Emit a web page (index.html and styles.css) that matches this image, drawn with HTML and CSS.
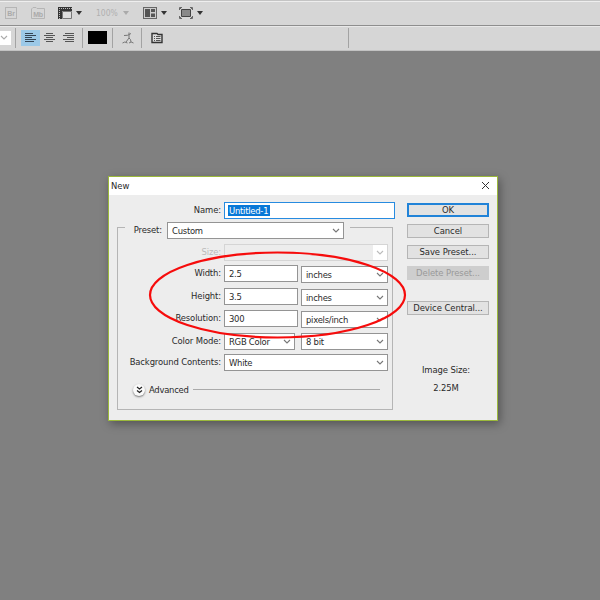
FILE: index.html
```html
<!DOCTYPE html>
<html lang="en">
<head>
<meta charset="utf-8">
<title>New</title>
<link rel="stylesheet" href="styles.css">
</head>
<body>
<header class="appbar">
  <svg class="icon br" viewBox="0 0 12 12"><rect x=".5" y=".5" width="11" height="11"/><text x="6" y="9">Br</text></svg>
  <svg class="icon mb" viewBox="0 0 14 12"><path d="M.5 11.5V2L2 .5h3l1 1h7.500v10z"/><text x="7" y="9.500">Mb</text></svg>
  <svg class="icon film" viewBox="0 0 14 12"><path d="M0 0h14v4H4v8H0z" fill="#333"/><path d="M4.500 4.500h9v7h-9z" fill="#ddd" stroke="#777"/><path d="M1 1.500h13M1.500 3v9" stroke="#bbb" stroke-dasharray="1 1"/></svg>
  <i class="tri"></i>
  <span class="percent">100%</span>
  <i class="tri faint"></i>
  <svg class="icon arrange" viewBox="0 0 14 12"><rect x=".5" y=".5" width="13" height="11" fill="#ccc" stroke="#666"/><path d="M2 2h5v8H2zM8 2h4v3H8zM8 6.500h4V10H8z" fill="#555"/></svg>
  <i class="tri"></i>
  <svg class="icon screen" viewBox="0 0 14 12"><rect x="2.500" y="2.500" width="9" height="7" fill="#888" stroke="#444"/><path d="M.5 3V.5H3M11 .5h2.500V3M.5 9v2.500H3M11 11.500h2.500V9M1 1l2 2M13 1l-2 2M1 11l2-2M13 11l-2-2" fill="none" stroke="#666"/></svg>
  <i class="tri"></i>
</header>
<div class="options">
  <span class="edge"><svg class="chev" viewBox="0 0 8 5"><path d="M1 1l3 3 3-3"/></svg></span>
  <i class="sep s1"></i>
  <span class="align on"><svg viewBox="0 0 11 10"><path d="M0 .5h8M0 2.500h11M0 4.500h7M0 6.500h11M0 8.500h9"/></svg></span>
  <span class="align"><svg viewBox="0 0 11 10"><path d="M2 .5h7M0 2.500h11M2 4.500h7M0 6.500h11M2 8.500h7"/></svg></span>
  <span class="align"><svg viewBox="0 0 11 10"><path d="M2 .5h9M0 2.500h11M4 4.500h7M0 6.500h11M2 8.500h9"/></svg></span>
  <i class="sep s2"></i>
  <span class="swatch"></span>
  <i class="sep s3"></i>
  <svg class="warp" viewBox="0 0 12 12"><path d="M2 3.500Q6 4 9 1.500M7 .5v5.500L4 10M7 6q2 1 2 4M.5 11q2-2 5 0M7 11q2-2 4.500 0"/></svg>
  <i class="sep s4"></i>
  <svg class="panel" viewBox="0 0 12 12"><path d="M1 10.500v-9h5l1 1h4v8z"/><path d="M3 4.500h1m1 0h4.500M3 6.500h1m1 0h4.500M3 8.500h1m1 0h4.500" class="thin"/></svg>
  <i class="sep s5"></i>
</div>
<main class="canvas">
  <section class="dialog">
    <div class="title"><span>New</span><svg viewBox="0 0 9 9"><path d="M1 1l7 7M8 1l-7 7"/></svg></div>
    <div class="content">
      <div class="left">
        <div class="name"><label>Name:</label><div class="field focus"><mark>Untitled-1</mark></div></div>
        <div class="group">
          <div class="preset"><label>Preset:</label><div class="field combo"><span>Custom</span><svg class="chev" viewBox="0 0 8 5"><path d="M1 1l3 3 3-3"/></svg></div></div>
          <div class="row size"><label>Size:</label><div class="field combo wide"><span></span><b><svg class="chev" viewBox="0 0 8 5"><path d="M1 1l3 3 3-3"/></svg></b></div></div>
          <div class="row width"><label>Width:</label><div class="field num">2.5</div><div class="field combo unit"><span>inches</span><svg class="chev" viewBox="0 0 8 5"><path d="M1 1l3 3 3-3"/></svg></div></div>
          <div class="row height"><label>Height:</label><div class="field num">3.5</div><div class="field combo unit"><span>inches</span><svg class="chev" viewBox="0 0 8 5"><path d="M1 1l3 3 3-3"/></svg></div></div>
          <div class="row resolution"><label>Resolution:</label><div class="field num">300</div><div class="field combo unit"><span>pixels/inch</span><svg class="chev" viewBox="0 0 8 5"><path d="M1 1l3 3 3-3"/></svg></div></div>
          <div class="row mode"><label>Color Mode:</label><div class="field combo rgb"><span>RGB Color</span><svg class="chev" viewBox="0 0 8 5"><path d="M1 1l3 3 3-3"/></svg></div><div class="field combo unit"><span>8 bit</span><svg class="chev" viewBox="0 0 8 5"><path d="M1 1l3 3 3-3"/></svg></div></div>
          <div class="row bg"><label>Background Contents:</label><div class="field combo wide"><span>White</span><svg class="chev" viewBox="0 0 8 5"><path d="M1 1l3 3 3-3"/></svg></div></div>
          <div class="advanced"><span class="round"><svg viewBox="0 0 7 8"><path d="M1 1l2.500 2L6 1M1 4.500l2.500 2 2.500-2"/></svg></span><span>Advanced</span><hr></div>
        </div>
      </div>
      <div class="right">
        <div class="btn primary">OK</div>
        <div class="btn">Cancel</div>
        <div class="btn">Save Preset...</div>
        <div class="btn disabled">Delete Preset...</div>
        <div class="btn device">Device Central...</div>
        <div class="info">Image Size:</div>
        <div class="info">2.25M</div>
      </div>
    </div>
    <svg class="ellipse" viewBox="0 0 260 90"><ellipse cx="129.500" cy="45" rx="127.500" ry="42.500"/></svg>
  </section>
</main>
</body>
</html>
```
FILE: styles.css
```css
* { box-sizing: border-box; }
body { margin: 0; height: 600px; overflow: hidden; background: #808080; font: 9.4px/15px "DejaVu Sans Condensed", "DejaVu Sans", sans-serif; font-stretch: condensed; letter-spacing: -.25px; color: #2a2a2a; display: flex; flex-direction: column; }
svg { display: block; flex: none; }
label { letter-spacing: -.12px; }
.appbar { height: 26px; flex: none; background: #d6d6d6; border-top: 1px solid #c4c4c4; border-bottom: 1px solid #8e8e8e; box-shadow: inset 0 1px #eee; display: flex; align-items: center; padding-left: 5px; }
.icon { height: 12px; width: 14px; }
.br { width: 12px; margin-right: 14px; }
.br, .mb { fill: none; stroke: #b5b5b5; }
.icon text { fill: #aaa; stroke: none; font: bold 7px "Liberation Sans", sans-serif; text-anchor: middle; }
.film { margin-left: 13px; }
.tri { border: 3px solid transparent; border-top: 4px solid #333; border-bottom: 0; margin-left: 4px; }
.percent { width: 23px; margin-left: 14px; color: #b0b0b0; font-size: 8.5px; letter-spacing: 0; }
.faint { border-top-color: #aaa; }
.arrange { margin-left: 14px; }
.screen { margin-left: 12px; }
.options { height: 25px; flex: none; background: #d6d6d6; border-top: 1px solid #e8e8e8; border-bottom: 1px solid #c2c2c2; display: flex; align-items: center; padding-bottom: 2px; }
.edge { width: 11px; height: 14px; background: #fff; display: flex; align-items: center; }
.chev { width: 8px; height: 5px; fill: none; stroke: #777; stroke-width: 1.1; }
.edge .chev { stroke: #aaa; }
.sep { width: 1px; height: 20px; background: #a3a3a3; }
.s1 { margin: 0 5px 0 4px; }
.align { width: 19px; height: 16px; display: flex; align-items: center; justify-content: center; }
.align svg { width: 11px; height: 10px; stroke: #555; stroke-width: 1.2; }
.align.on { background: #9cc9e8; }
.align.on svg { stroke: #345; }
.s2 { margin: 0 5px 0 4px; }
.swatch { width: 19px; height: 13px; background: #000; }
.s3 { margin: 0 9px 0 5px; }
.warp { width: 12px; height: 12px; fill: none; stroke: #777; }
.s4 { margin: 0 9px 0 7px; }
.panel { width: 12px; height: 12px; fill: #ddd; stroke: #333; stroke-width: 1.4; }
.panel .thin { stroke-width: 1; fill: none; stroke: #555; }
.s5 { margin-left: 185px; }
.canvas { flex: 1; padding: 125px 0 0 108px; }
.dialog { position: relative; width: 390px; height: 245px; background: #ededed; border: 1px solid #9bb83b; box-shadow: 2px 3px 9px rgba(0,0,0,.35); }
.title { height: 18px; background: #fff; display: flex; align-items: center; justify-content: space-between; padding: 0 7px 2px 2px; letter-spacing: 0; }
.title svg { width: 9px; height: 9px; stroke: #333; }
.content { display: flex; padding: 7px 8px 0; justify-content: space-between; }
.left { width: 278px; }
.name { display: flex; }
.name label { width: 104px; text-align: right; margin-right: 3px; }
.field { height: 17px; background: #fff; border: 1px solid #949494; padding: 0 4px; white-space: nowrap; }
.focus { width: 171px; border-color: #278be0; padding: 2px 3px; }
mark { display: block; width: 42px; height: 11px; line-height: 11px; background: #0878d7; color: #fff; padding-left: 1px; }
.group { width: 276px; height: 183px; margin-top: 8px; border: 1px solid #b5b5b5; }
.preset { display: flex; margin: -6px 0 0 7px; width: 225px; background: #ededed; }
.preset label { width: 37px; text-align: right; margin-right: 5px; }
.preset .combo { width: 177px; }
.combo { display: flex; align-items: center; justify-content: space-between; padding-right: 3px; }
.row { display: grid; grid-template-columns: 103px auto auto; column-gap: 3px; justify-content: start; height: 17px; }
.row label { text-align: right; white-space: nowrap; }
.wide { width: 164px; }
.num { width: 74px; }
.unit { width: 87px; margin-top: 1px; }
.size { margin-top: 5px; color: #bbb; }
.size .field { background: #ededed; border-color: #d5d5d5; padding-right: 0; }
.size b { height: 15px; width: 14px; background: #fff; display: flex; align-items: center; padding-left: 3px; }
.size .chev { stroke: #bbb; }
.width { margin-top: 4px; }
.height { margin-top: 6px; }
.resolution { margin-top: 5px; }
.mode { margin-top: 6px; grid-template-columns: 103px 71px auto; }
.mode .unit { margin: 0 0 0 3px; }
.bg { margin-top: 4px; }
.advanced { display: flex; align-items: center; margin: 11px 12px 0 15px; }
.round { width: 12px; height: 12px; border-radius: 50%; background: #fafafa; box-shadow: 0 1px 2px #777; display: grid; place-items: center; margin-right: 4px; }
.round svg { width: 7px; height: 8px; fill: none; stroke: #222; stroke-width: 1.2; }
.advanced hr { flex: 1; border: 0; height: 1px; background: #aaa; margin: 0 0 0 4px; }
.right { width: 82px; }
.btn { height: 14px; line-height: 12px; border: 1px solid #b5b5b5; background: #e2e2e2; text-align: center; margin-bottom: 7px; letter-spacing: -.05px; white-space: nowrap; }
.primary { border: 2px solid #2183d8; line-height: 10px; margin-top: 1px; }
.disabled { background: #cecece; border-color: #cecece; color: #999; }
.device { margin: 21px 0 47px; }
.info { text-align: center; margin-bottom: 3px; padding-right: 4px; letter-spacing: -.1px; }
.ellipse { position: absolute; left: 39px; top: 73px; width: 260px; height: 90px; fill: none; stroke: #f60c0c; stroke-width: 2.2; }
```
